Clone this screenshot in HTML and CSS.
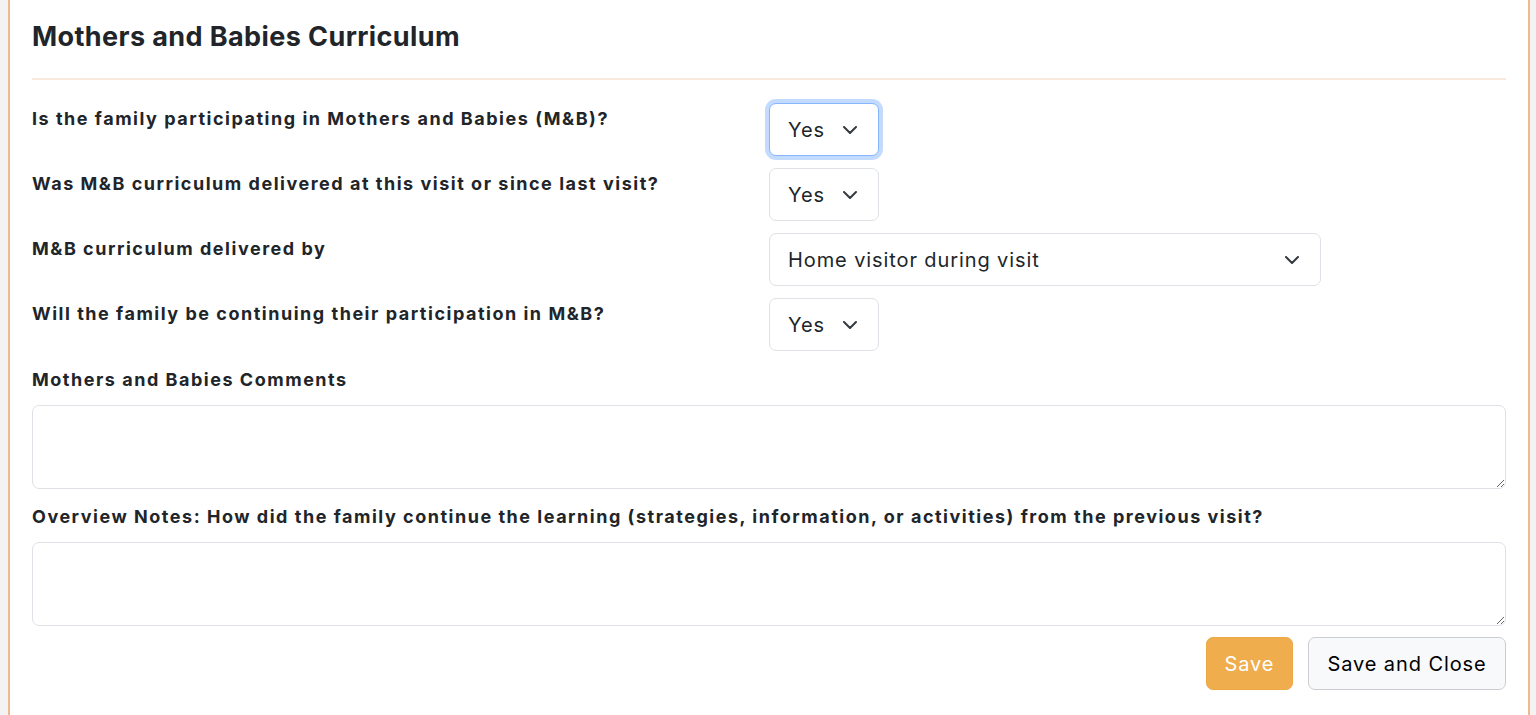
FILE: index.html
```html
<!DOCTYPE html>
<html lang="en">
<head>
<meta charset="utf-8">
<title>Mothers and Babies Curriculum</title>
<link rel="stylesheet" href="styles.css">
</head>
<body>
<div class="card">
  <h2 class="title">Mothers and Babies Curriculum</h2>
  <div class="rule"></div>
  <div class="rows">
    <div class="row">
      <label class="lbl">Is the family participating in Mothers and Babies (M&amp;B)?</label>
      <div class="sel sel-sm focus"><span>Yes</span><svg class="chev" viewBox="0 0 14 8"><polyline points="1,1 7,7 13,1"/></svg></div>
    </div>
    <div class="row">
      <label class="lbl">Was M&amp;B curriculum delivered at this visit or since last visit?</label>
      <div class="sel sel-sm"><span>Yes</span><svg class="chev" viewBox="0 0 14 8"><polyline points="1,1 7,7 13,1"/></svg></div>
    </div>
    <div class="row">
      <label class="lbl">M&amp;B curriculum delivered by</label>
      <div class="sel sel-lg"><span>Home visitor during visit</span><svg class="chev" viewBox="0 0 14 8"><polyline points="1,1 7,7 13,1"/></svg></div>
    </div>
    <div class="row">
      <label class="lbl">Will the family be continuing their participation in M&amp;B?</label>
      <div class="sel sel-sm"><span>Yes</span><svg class="chev" viewBox="0 0 14 8"><polyline points="1,1 7,7 13,1"/></svg></div>
    </div>
  </div>
  <div class="block">
    <label class="lbl">Mothers and Babies Comments</label>
    <textarea class="ta"></textarea>
  </div>
  <div class="block">
    <label class="lbl">Overview Notes: How did the family continue the learning (strategies, information, or activities) from the previous visit?</label>
    <textarea class="ta"></textarea>
  </div>
  <div class="actions">
    <button class="btn btn-save">Save</button>
    <button class="btn btn-close">Save and Close</button>
  </div>
</div>
</body>
</html>
```
FILE: styles.css
```css
html, body {
  margin: 0;
  padding: 0;
}
body {
  background: #f3f3f3;
  font-family: Inter, "Noto Sans", "Liberation Sans", sans-serif;
  color: #212529;
  height: 715px;
  overflow: hidden;
}
.card {
  box-sizing: border-box;
  margin-left: 8px;
  width: 1522px;
  height: 715px;
  background: #fff;
  border-left: 2px solid #f0b98c;
  border-right: 2px solid #f0b98c;
  padding: 0 22px;
}
.title {
  margin: 0;
  padding-top: 20px;
  font-size: 27px;
  line-height: 34px;
  font-weight: 700;
  letter-spacing: 0.4px;
  color: #212529;
}
.rule {
  height: 2px;
  background: #fbe9dd;
  margin-top: 24px;
}
.rows {
  margin-top: 23px;
  display: flex;
  flex-direction: column;
  gap: 12px;
}
.row {
  display: grid;
  grid-template-columns: 737px auto;
  align-items: start;
}
.lbl {
  display: block;
  font-size: 18px;
  line-height: 27px;
  font-weight: 700;
  letter-spacing: 1.52px;
  color: #212529;
}
.row .lbl {
  margin-top: 2px;
}
.sel {
  box-sizing: border-box;
  height: 53px;
  border: 1px solid #dee2e6;
  border-radius: 7px;
  background: #fff;
  display: flex;
  align-items: center;
  justify-content: space-between;
  padding: 0 21px 0 18px;
  font-size: 20px;
  letter-spacing: 0.9px;
  color: #212529;
}
.sel-sm { width: 110px; }
.sel-lg { width: 552px; }
.sel.focus {
  border-color: #86b7fe;
  box-shadow: 0 0 0 4px rgba(13, 110, 253, 0.25);
}
.chev {
  width: 14px;
  height: 8px;
  fill: none;
  stroke: #343a40;
  stroke-width: 2;
  stroke-linecap: round;
  stroke-linejoin: round;
}
.block {
  margin-top: 15px;
}
.block + .block {
  margin-top: 14px;
}
.ta {
  display: block;
  box-sizing: border-box;
  width: 100%;
  height: 84px;
  margin-top: 12px;
  border: 1px solid #dee2e6;
  border-radius: 7px;
  font-family: inherit;
  font-size: 20px;
  resize: vertical;
  background: #fff;
}
.actions {
  display: flex;
  justify-content: flex-end;
  gap: 15px;
  margin-top: 11px;
}
.btn {
  box-sizing: border-box;
  height: 53px;
  border-radius: 7px;
  font-family: inherit;
  font-size: 20px;
  letter-spacing: 0.9px;
  padding: 0;
  cursor: pointer;
}
.btn-save {
  width: 87px;
  background: #f0ad4e;
  border: 1px solid #eea846;
  color: #fff;
}
.btn-close {
  width: 198px;
  background: #f8f9fa;
  border: 1px solid #cbcdd0;
  color: #000;
}
```
